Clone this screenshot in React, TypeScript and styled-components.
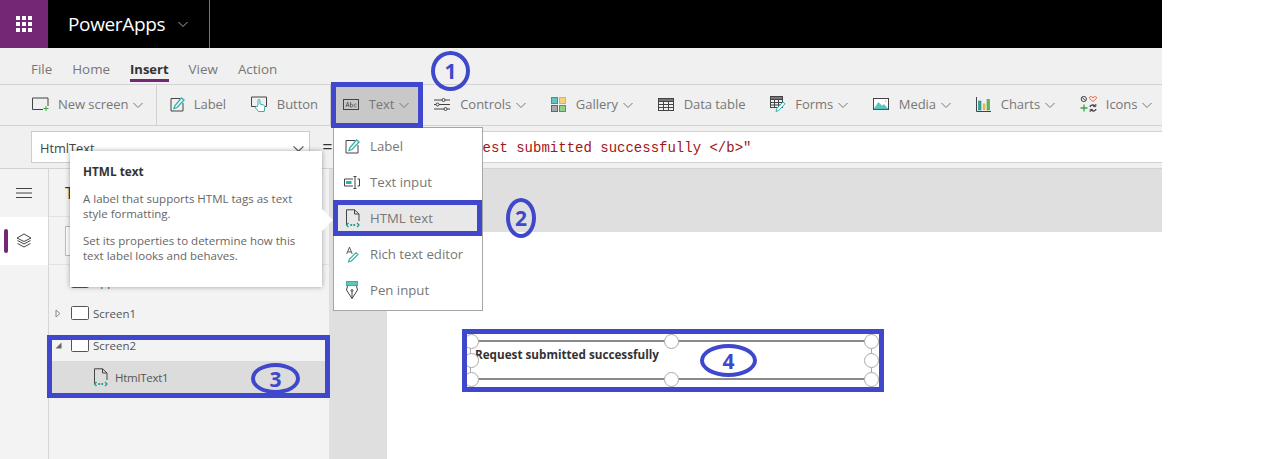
import * as React from 'react';
import styled, { createGlobalStyle } from 'styled-components';

const BLUE = '#3f48cc';
const TEAL = '#35aea8';
const INK = '#444';

const GlobalStyle = createGlobalStyle`
  html, body {
    margin: 0;
    padding: 0;
    background: #fff;
  }
  body {
    font-family: "Open Sans", "Noto Sans", Arial, sans-serif;
    overflow: hidden;
  }
  * {
    box-sizing: border-box;
  }
`;

const Page = styled.div`
  position: relative;
  width: 1278px;
  height: 459px;
  overflow: hidden;
  background: #fff;
`;

const Shell = styled.div`
  width: 1162px;
  height: 459px;
  display: flex;
  flex-direction: column;
  background: #f0f0f0;
`;

const TopBar = styled.header`
  height: 48px;
  flex: none;
  display: flex;
  background: #000;
  color: #fff;
`;

const Waffle = styled.div`
  width: 48px;
  background: #742774;
  display: flex;
  align-items: center;
  justify-content: center;
`;

const AppSwitch = styled.div`
  width: 162px;
  display: flex;
  align-items: center;
  gap: 13px;
  padding-left: 20px;
  border-right: 1px solid #777;
  font-size: 19px;
  letter-spacing: -0.35px;
`;

const Tabs = styled.nav`
  height: 37px;
  flex: none;
  display: flex;
  padding-left: 31px;
  gap: 20px;
  border-bottom: 1px solid #d2d2d2;
`;

const Tab = styled.div<{ $active?: boolean }>`
  height: 34px;
  padding-top: 12px;
  font-size: ${(p) => (p.$active ? 13 : 13.4)}px;
  line-height: 18px;
  color: ${(p) => (p.$active ? '#333' : '#777')};
  font-weight: ${(p) => (p.$active ? 700 : 400)};
  border-bottom: ${(p) => (p.$active ? '3px solid #742774' : 'none')};
`;

const Ribbon = styled.div`
  height: 41px;
  flex: none;
  display: flex;
  align-items: stretch;
  padding-left: 19px;
  border-bottom: 1px solid #d2d2d2;
`;

const RibbonItem = styled.div<{ $pressed?: boolean; $first?: boolean }>`
  display: flex;
  align-items: center;
  padding: 0 ${(p) => (p.$first ? 13 : 12.4)}px 2px ${(p) => (p.$first ? 13 : 12.4)}px;
  font-size: 13px;
  letter-spacing: -0.05px;
  color: #777;
  white-space: nowrap;
  background: ${(p) => (p.$pressed ? '#c8c8c8' : 'transparent')};
  border-right: ${(p) => (p.$first ? '1px solid #d2d2d2' : 'none')};
`;

const ItemIcon = styled.span<{ $width: number }>`
  width: ${(p) => p.$width}px;
  height: 18px;
  margin-right: 10px;
  display: flex;
  align-items: center;
  flex: none;
  svg {
    flex: none;
  }
`;

const ItemChevron = styled.span`
  display: flex;
  margin-left: 5px;
  padding-top: 2px;
`;

const FormulaRow = styled.div`
  height: 43px;
  flex: none;
  display: flex;
  padding: 5px 0 5px;
  border-bottom: 1px solid #d2d2d2;
`;

const PropertySelect = styled.div`
  width: 279px;
  margin-left: 31px;
  display: flex;
  align-items: center;
  justify-content: space-between;
  padding: 2px 5px 0 8px;
  background: #fff;
  border: 1px solid #ccc;
  font-size: 12.8px;
  color: #444;
`;

const EqualsSign = styled.div`
  width: 35px;
  text-align: center;
  font-size: 18px;
  line-height: 31px;
  color: #333;
`;

const FormulaField = styled.div`
  flex: 1;
  display: flex;
  align-items: center;
  padding: 2px 0 0 62px;
  background: #fff;
  border-top: 1px solid #d2d2d2;
  border-bottom: 1px solid #d2d2d2;
  font-family: "Liberation Mono", monospace;
  font-size: 14px;
  color: #a31515;
  white-space: pre;
`;

const Body = styled.div`
  flex: 1;
  display: flex;
  min-height: 0;
`;

const Rail = styled.aside`
  width: 49px;
  flex: none;
  display: flex;
  flex-direction: column;
  background: #f3f3f3;
  border-right: 1px solid #d6d6d6;
`;

const RailButton = styled.div<{ $active?: boolean }>`
  position: relative;
  height: 48px;
  display: flex;
  align-items: center;
  justify-content: center;
  background: ${(p) => (p.$active ? '#fff' : 'transparent')};
`;

const RailMark = styled.span`
  position: absolute;
  left: 4px;
  top: 12px;
  width: 4px;
  height: 24px;
  border-radius: 2px;
  background: #742774;
`;

const TreePanel = styled.section`
  width: 280px;
  flex: none;
  display: flex;
  flex-direction: column;
  background: #f3f3f3;
`;

const TreeTitle = styled.div`
  height: 48px;
  padding: 13px 0 0 16px;
  font-size: 16px;
  color: #333;
  border-bottom: 1px solid #e2e2e2;
`;

const SearchRow = styled.div`
  height: 48px;
  padding: 9px 0 0 16px;
  border-bottom: 1px solid #e2e2e2;
`;

const SearchBox = styled.div`
  width: 200px;
  height: 30px;
  background: #fff;
  border: 1px solid #bbb;
`;

const TreeRow = styled.div<{ $selected?: boolean; $indent?: number }>`
  height: 32px;
  display: flex;
  align-items: center;
  padding-left: ${(p) => p.$indent ?? 6}px;
  font-size: 11.5px;
  letter-spacing: ${(p) => (p.$selected ? '-0.25px' : '0')};
  color: #555;
  background: ${(p) => (p.$selected ? '#dcdcdc' : 'transparent')};
`;

const Caret = styled.span`
  width: 16px;
  display: flex;
  flex: none;
`;

const RowIcon = styled.span`
  width: 22px;
  display: flex;
  flex: none;
`;

const Workspace = styled.main`
  flex: 1;
  display: flex;
  padding: 63px 0 0 58px;
  background: #dfdfdf;
`;

const Canvas = styled.div`
  position: relative;
  flex: 1;
  background: #fff;
`;

const ControlFrame = styled.div`
  position: absolute;
  left: 83px;
  top: 108px;
  width: 402px;
  height: 40px;
  padding: 4px 0 0 4px;
  border-top: 2px solid #8a8a8a;
  border-bottom: 2px solid #8a8a8a;
  border-left: 1px solid #aaa;
  border-right: 1px solid #aaa;
  font-size: 11.7px;
  line-height: 16px;
  font-weight: 700;
  color: #333;
`;

const Handle = styled.span<{ $x: number; $y: number }>`
  position: absolute;
  left: ${(p) => p.$x - 7}px;
  top: ${(p) => p.$y - 7}px;
  width: 15px;
  height: 15px;
  border-radius: 50%;
  background: #fff;
  border: 1.5px solid #aaa;
`;

const Tooltip = styled.div`
  position: absolute;
  left: 70px;
  top: 151px;
  width: 252px;
  height: 136px;
  padding: 13px 13px;
  background: #fff;
  box-shadow: 0 0 5px rgba(0, 0, 0, 0.35);
  font-size: 11.5px;
  line-height: 15px;
  color: #666;
`;

const TooltipTitle = styled.div`
  font-size: 11.8px;
  font-weight: 700;
  color: #333;
  margin-bottom: 12px;
`;

const TooltipText = styled.p`
  margin: 0 0 12px;
`;

const TooltipArrow = styled.span`
  position: absolute;
  right: -11px;
  top: 58px;
  width: 22px;
  height: 22px;
  background: #fff;
  transform: rotate(45deg) scale(0.7);
`;

const Menu = styled.div`
  position: absolute;
  left: 333px;
  top: 127px;
  width: 150px;
  height: 184px;
  display: flex;
  flex-direction: column;
  background: #fff;
  border: 1px solid #a6a6a6;
`;

const MenuItem = styled.div<{ $hover?: boolean }>`
  height: 36px;
  display: flex;
  align-items: center;
  padding-left: 10px;
  font-size: 13.2px;
  color: #777;
  white-space: nowrap;
  background: ${(p) => (p.$hover ? '#e8e8e8' : 'transparent')};
`;

const MenuIcon = styled.span`
  width: 16px;
  margin-right: 10px;
  display: flex;
  justify-content: center;
  flex: none;
`;

const Callout = styled.div<{ $x: number; $y: number; $w: number; $h: number }>`
  position: absolute;
  left: ${(p) => p.$x}px;
  top: ${(p) => p.$y}px;
  width: ${(p) => p.$w}px;
  height: ${(p) => p.$h}px;
  border: 5px solid ${BLUE};
  pointer-events: none;
`;

const StepBadge = styled(Callout)`
  border-width: 4px;
  border-radius: 50%;
  display: flex;
  align-items: center;
  justify-content: center;
  font-size: 21px;
  font-weight: 700;
  color: ${BLUE};
`;

const Chevron = ({ size = 10, color = '#777' }: { size?: number; color?: string }) => (
  <svg width={size} height={size} viewBox="0 0 10 10" fill="none" stroke={color} strokeWidth="1">
    <path d="M0.5 3 5 7.5 9.5 3" />
  </svg>
);

const Pencil = () => (
  <svg width="15" height="15" viewBox="0 0 15 15" fill="none">
    <path d="M10 1.5H1v12.5h12V6" stroke={INK} />
    <path d="M4 11.5 5 8.5 11.5 1 14 3 7 10.5Z" fill="#fff" stroke={TEAL} strokeWidth="1.3" />
  </svg>
);

const HtmlDoc = ({ w = 15, h = 19 }: { w?: number; h?: number }) => (
  <svg width={w} height={h} viewBox="0 0 15 19" fill="none">
    <path d="M1.5 16V.8H9.5L14 5V12M9.5.8V5H14" stroke={INK} />
    <path d="M3.5 14 1.5 16 3.5 18M12 14 14 16 12 18" stroke="#16998f" strokeWidth="1.2" />
    <circle cx="6.2" cy="16" r="1.1" fill="#16998f" />
    <circle cx="9.2" cy="16" r="1.1" fill="#16998f" />
  </svg>
);

const ScreenGlyph = () => (
  <svg width="18" height="14" viewBox="0 0 18 14" fill="#fff" stroke="#555">
    <rect x="0.5" y="0.5" width="17" height="13" rx="1" />
  </svg>
);

const ribbonIcons: Record<string, React.ReactNode> = {
  newScreen: (
    <svg width="17" height="14" viewBox="0 0 17 14" fill="none">
      <path d="M11 12.5H.5V1H16v8" stroke={INK} />
      <path d="M14 9v5M11.5 11.5h5" stroke="#3aa345" />
    </svg>
  ),
  label: <Pencil />,
  button: (
    <svg width="18" height="17" viewBox="0 0 18 17" fill="none">
      <path d="M5 10.5H.5V1h15v9.5h-2" stroke={INK} />
      <path d="M7 9V4.5a1 1 0 0 1 2 0V8l3.5 1c1 .3 1.5 1 1.3 2l-.6 4.5H7.5L4.5 12c-.6-1 .8-2 1.5-1Z" fill="#fff" stroke={TEAL} />
    </svg>
  ),
  text: (
    <svg width="16" height="11" viewBox="0 0 16 11" fill="none">
      <rect x="0.5" y="0.5" width="15" height="10" stroke={INK} />
      <path d="M3 8 4.6 3 6.2 8M3.6 6.5h2M7.5 3v5c1.5.3 2.3-.2 2.3-1.5S8.5 5 7.5 5.5M13.5 5.2c-1.6-.6-2.4.2-2.4 1.3s.8 1.9 2.4 1.3" stroke={INK} strokeWidth="0.7" />
    </svg>
  ),
  controls: (
    <svg width="16" height="13" viewBox="0 0 16 13" fill="none" stroke={INK}>
      <path d="M0 2h8M11 2h5M0 6.5h2M5 6.5h11M0 11h10M13 11h3" />
      <circle cx="9.5" cy="2" r="1.5" />
      <circle cx="3.5" cy="6.5" r="1.5" />
      <circle cx="11.5" cy="11" r="1.5" />
    </svg>
  ),
  gallery: (
    <svg width="15" height="15" viewBox="0 0 15 15">
      <rect x="0.5" y="0.5" width="6" height="6" fill="#5cc6c0" stroke="#2c9f99" />
      <rect x="8.5" y="0.5" width="6" height="6" fill="#fbcf7a" stroke="#eeb04e" />
      <rect x="0.5" y="8.5" width="6" height="6" fill="#a8a8a8" stroke="#666" />
      <rect x="8.5" y="8.5" width="6" height="6" fill="#8fce8c" stroke="#48a346" />
    </svg>
  ),
  dataTable: (
    <svg width="16" height="13" viewBox="0 0 16 13" fill="none" stroke={INK}>
      <rect x="0.5" y="0.5" width="15" height="12" />
      <rect x="0.5" y="0.5" width="15" height="3" fill="#777" />
      <path d="M0 6.5h16M0 9.5h16M5.5 3v10M10.5 3v10" />
    </svg>
  ),
  forms: (
    <svg width="16" height="16" viewBox="0 0 16 16" fill="none">
      <g stroke={INK}>
        <rect x="0.5" y="0.5" width="12" height="11" />
        <rect x="0.5" y="0.5" width="12" height="3" fill="#777" />
        <path d="M0 6.5h13M0 9h13M4.5 3v9M8.5 3v9" />
      </g>
      <path d="M6 15.5 6.8 12.5 13 6l2 1.8-6.2 6.6Z" fill="#fff" stroke={TEAL} />
    </svg>
  ),
  media: (
    <svg width="16" height="12" viewBox="0 0 16 12">
      <rect x="0.5" y="0.5" width="15" height="11" fill="#fff" stroke={INK} />
      <path d="M1 11 5.5 4.5 9 8l2-1.5L15 11Z" fill="#5cc6c0" stroke={TEAL} strokeWidth="0.5" />
      <rect x="12" y="2.5" width="1.2" height="1.2" fill="#f0a030" />
    </svg>
  ),
  charts: (
    <svg width="15" height="15" viewBox="0 0 15 15" fill="none">
      <path d="M.5 0v14.5H15" stroke={INK} />
      <rect x="2.5" y="4" width="2.5" height="9" fill="#2aa6a0" stroke="#1d8a85" strokeWidth="0.6" />
      <rect x="6.8" y="6.5" width="2.5" height="6.5" fill="#f2b03c" />
      <rect x="11" y="2.5" width="2.5" height="10.5" fill="#5fb95c" stroke="#44a141" strokeWidth="0.6" />
    </svg>
  ),
  icons: (
    <svg width="18" height="16" viewBox="0 0 18 16" fill="none">
      <circle cx="3.8" cy="3" r="2.6" stroke={INK} />
      <path d="M2 1.2 5.6 4.8" stroke={INK} />
      <path d="M13 5.5 9.7 2.6c-.9-1.2.5-2.6 1.8-1.9l1.5 1 1.5-1c1.3-.7 2.7.7 1.8 1.9Z" stroke="#f0603c" />
      <path d="M4 8.5v7M.5 12h7" stroke="#3aa345" strokeWidth="1.3" />
      <path d="M10 11c.3-1.8 3-2.8 5-1M16 13c-.3 1.8-3 2.8-5 1" stroke={INK} strokeWidth="1.4" />
      <path d="M15.8 8v2.6h-2.6M10.2 16v-2.6h2.6" stroke={INK} />
    </svg>
  ),
};

const ribbonItems = [
  { key: 'label', text: 'Label', width: 14 },
  { key: 'button', text: 'Button', width: 16 },
  { key: 'text', text: 'Text', width: 16, menu: true, pressed: true },
  { key: 'controls', text: 'Controls', width: 16, menu: true },
  { key: 'gallery', text: 'Gallery', width: 15, menu: true },
  { key: 'dataTable', text: 'Data table', width: 16 },
  { key: 'forms', text: 'Forms', width: 15, menu: true },
  { key: 'media', text: 'Media', width: 16, menu: true },
  { key: 'charts', text: 'Charts', width: 15, menu: true },
  { key: 'icons', text: 'Icons', width: 16, menu: true },
];

const menuItems: { text: string; hover?: boolean; icon: React.ReactNode }[] = [
  { text: 'Label', icon: <Pencil /> },
  {
    text: 'Text input',
    icon: (
      <svg width="16" height="13" viewBox="0 0 16 13" fill="none">
        <path d="M9 3H.5v7H9M13.5 3H15.5v7H13.5" stroke={INK} />
        <rect x="2" y="5" width="5.5" height="3" fill={TEAL} />
        <path d="M9.5 .5h3M9.5 12.5h3M11 .5v12" stroke={INK} />
      </svg>
    ),
  },
  { text: 'HTML text', hover: true, icon: <HtmlDoc w={15} h={19} /> },
  {
    text: 'Rich text editor',
    icon: (
      <svg width="13" height="19" viewBox="0 0 15 19" fill="none">
        <path d="M.8 9 4 1l3.2 8M2 6.5h4" stroke={INK} />
        <path d="M3 18l.8-3L11.5 7.5l2.4 2-7.7 7.5Z" fill="#fff" stroke={TEAL} strokeWidth="1.3" />
      </svg>
    ),
  },
  {
    text: 'Pen input',
    icon: (
      <svg width="12" height="18" viewBox="0 0 12 18" fill="none">
        <rect x="0.5" y="0.5" width="11" height="4" fill="#5cc6c0" stroke={TEAL} />
        <path d="M1.5 5 .5 9 6 17.5 11.5 9 10.5 5M6 17.5V10" stroke={INK} />
        <circle cx="6" cy="9.5" r="1" stroke={INK} />
      </svg>
    ),
  },
];

const handles = [
  [0, -1],
  [200, -1],
  [400, -1],
  [0, 18],
  [400, 18],
  [0, 37],
  [200, 37],
  [400, 37],
];

export default function App() {
  return (
    <Page>
      <GlobalStyle />
      <Shell>
        <TopBar>
          <Waffle>
            <svg width="16" height="16" viewBox="0 0 16 16" fill="#fff">
              {[0, 6, 12].map((y) =>
                [0, 6, 12].map((x) => <rect key={`${x}-${y}`} x={x} y={y} width="4" height="4" />),
              )}
            </svg>
          </Waffle>
          <AppSwitch>
            PowerApps
            <Chevron size={10} color="#aaa" />
          </AppSwitch>
        </TopBar>
        <Tabs>
          <Tab>File</Tab>
          <Tab>Home</Tab>
          <Tab $active>Insert</Tab>
          <Tab>View</Tab>
          <Tab>Action</Tab>
        </Tabs>
        <Ribbon>
          <RibbonItem $first>
            <ItemIcon $width={16}>{ribbonIcons.newScreen}</ItemIcon>
            New screen
            <ItemChevron>
              <Chevron />
            </ItemChevron>
          </RibbonItem>
          {ribbonItems.map((item) => (
            <RibbonItem key={item.key} $pressed={item.pressed}>
              <ItemIcon $width={item.width}>{ribbonIcons[item.key]}</ItemIcon>
              {item.text}
              {item.menu && (
                <ItemChevron>
                  <Chevron />
                </ItemChevron>
              )}
            </RibbonItem>
          ))}
        </Ribbon>
        <FormulaRow>
          <PropertySelect>
            HtmlText
            <Chevron size={11} color="#555" />
          </PropertySelect>
          <EqualsSign>=</EqualsSign>
          <FormulaField>{'"<b> Request submitted successfully </b>"'}</FormulaField>
        </FormulaRow>
        <Body>
          <Rail>
            <RailButton>
              <svg width="16" height="10" viewBox="0 0 16 10" stroke="#444">
                <path d="M0 .5h16M0 5h16M0 9.5h16" />
              </svg>
            </RailButton>
            <RailButton $active>
              <RailMark />
              <svg width="16" height="16" viewBox="0 0 16 16" fill="none" stroke="#444">
                <path d="M8 1 15 5 8 8.5 1 5Z" />
                <path d="M1.5 7.5 8 11l6.5-3.5M1.5 10.5 8 14l6.5-3.5" />
              </svg>
            </RailButton>
          </Rail>
          <TreePanel>
            <TreeTitle>Tree view</TreeTitle>
            <SearchRow>
              <SearchBox />
            </SearchRow>
            <TreeRow>
              <Caret />
              <RowIcon>
                <ScreenGlyph />
              </RowIcon>
              App
            </TreeRow>
            <TreeRow>
              <Caret>
                <svg width="6" height="9" viewBox="0 0 6 9" fill="none" stroke="#888">
                  <path d="M1 1 5 4.5 1 8Z" />
                </svg>
              </Caret>
              <RowIcon>
                <ScreenGlyph />
              </RowIcon>
              Screen1
            </TreeRow>
            <TreeRow>
              <Caret>
                <svg width="7" height="7" viewBox="0 0 7 7" fill="#666">
                  <path d="M6.5 0.5V6.5H0.5Z" />
                </svg>
              </Caret>
              <RowIcon>
                <ScreenGlyph />
              </RowIcon>
              Screen2
            </TreeRow>
            <TreeRow $selected $indent={44}>
              <RowIcon>
                <HtmlDoc />
              </RowIcon>
              HtmlText1
            </TreeRow>
          </TreePanel>
          <Workspace>
            <Canvas>
              <ControlFrame>
                Request submitted successfully
                {handles.map(([x, y]) => (
                  <Handle key={`${x}-${y}`} $x={x} $y={y} />
                ))}
              </ControlFrame>
            </Canvas>
          </Workspace>
        </Body>
      </Shell>

      <Tooltip>
        <TooltipTitle>HTML text</TooltipTitle>
        <TooltipText>A label that supports HTML tags as text style formatting.</TooltipText>
        <TooltipText>Set its properties to determine how this text label looks and behaves.</TooltipText>
        <TooltipArrow />
      </Tooltip>

      <Menu>
        {menuItems.map((item) => (
          <MenuItem key={item.text} $hover={item.hover}>
            <MenuIcon>{item.icon}</MenuIcon>
            {item.text}
          </MenuItem>
        ))}
      </Menu>

      <Callout $x={331} $y={82} $w={92} $h={46} />
      <Callout $x={333} $y={200} $w={149} $h={36} />
      <Callout $x={47} $y={335} $w={283} $h={63} />
      <Callout $x={462} $y={329} $w={422} $h={63} />
      <StepBadge $x={431} $y={51} $w={39} $h={40}>1</StepBadge>
      <StepBadge $x={506} $y={198} $w={30} $h={40}>2</StepBadge>
      <StepBadge $x={251} $y={363} $w={49} $h={31}>3</StepBadge>
      <StepBadge $x={700} $y={344} $w={57} $h={33}>4</StepBadge>
    </Page>
  );
}
